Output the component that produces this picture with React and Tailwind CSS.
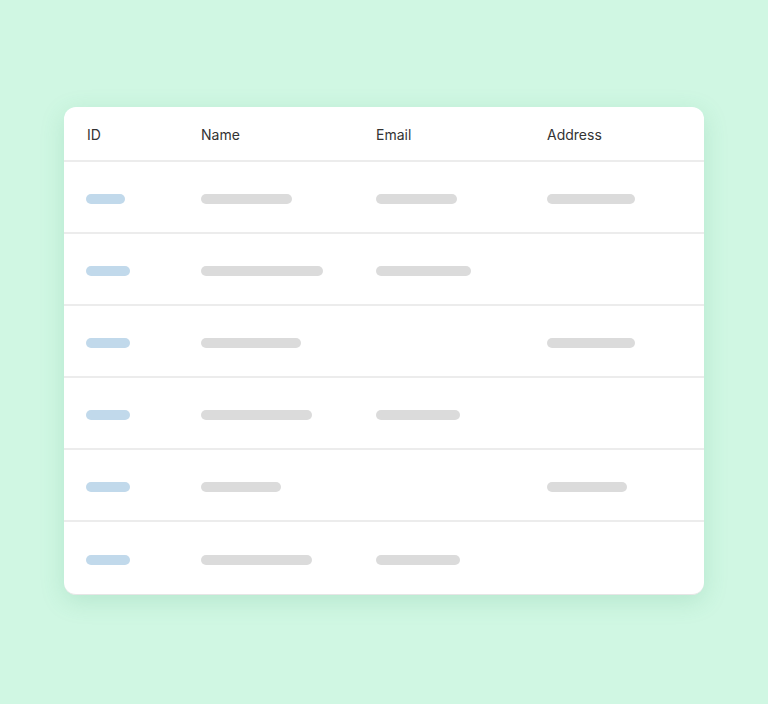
const rows = [
  { id: 39, name: 91, email: 81, address: 88 },
  { id: 44, name: 122, email: 95, address: 0 },
  { id: 44, name: 100, email: 0, address: 88 },
  { id: 44, name: 111, email: 84, address: 0 },
  { id: 44, name: 80, email: 0, address: 80 },
  { id: 44, name: 111, email: 84, address: 0 },
];

const cols = 'grid grid-cols-[115px_175px_171px_1fr] items-center px-[22px]';

function Bar({ w, blue }) {
  if (!w) return <div />;
  return (
    <div
      className={`h-[10px] rounded-full ${blue ? 'bg-[#c1d9eb]' : 'bg-[#dbdbdb]'}`}
      style={{ width: w }}
    />
  );
}

export default function App() {
  return (
    <div className="w-[768px] h-[704px] bg-[#d0f7e3] pt-[107px] px-[64px]" style={{ fontFamily: 'Inter, "Noto Sans", sans-serif' }}>
      <div className="bg-white rounded-[12px] overflow-hidden shadow-[0_6px_24px_rgba(60,160,110,0.18)] border-b border-[#e6e6e6]">
        {/* header */}
        <div className={`${cols} h-[55px] pt-[2px] border-b-2 border-[#ececec] text-[14px] text-[#333333]`}>
          <div className="pl-px">ID</div>
          <div>Name</div>
          <div>Email</div>
          <div>Address</div>
        </div>

        {rows.map((r, i) => (
          <div
            key={i}
            className={`${cols} h-[72px] pt-1 ${i < rows.length - 1 ? 'border-b-2 border-[#ececec]' : ''}`}
          >
            <Bar w={r.id} blue />
            <Bar w={r.name} />
            <Bar w={r.email} />
            <Bar w={r.address} />
          </div>
        ))}
      </div>
    </div>
  );
}
